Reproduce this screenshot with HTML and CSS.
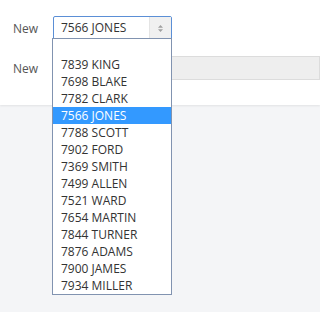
FILE: index.html
```html
<!DOCTYPE html>
<html>
<head>
<meta charset="utf-8">
<link rel="stylesheet" href="styles.css">
</head>
<body>
<div class="panel">
  <div class="row">
    <span class="label">New</span>
    <div class="select">
      <span class="value">7566 JONES</span>
      <span class="arrow">
        <svg width="5" height="7" viewBox="0 0 5 7"><path d="M2.5 0 L5 2.8 L0 2.8 Z M0 4.2 L5 4.2 L2.5 7 Z" fill="#a0a0a0"/></svg>
      </span>
    </div>
  </div>
  <div class="row">
    <span class="label">New</span>
    <div class="input"></div>
  </div>
</div>
<ul class="listbox">
  <li class="opt"></li>
  <li class="opt">7839 KING</li>
  <li class="opt">7698 BLAKE</li>
  <li class="opt">7782 CLARK</li>
  <li class="opt selected">7566 JONES</li>
  <li class="opt">7788 SCOTT</li>
  <li class="opt">7902 FORD</li>
  <li class="opt">7369 SMITH</li>
  <li class="opt">7499 ALLEN</li>
  <li class="opt">7521 WARD</li>
  <li class="opt">7654 MARTIN</li>
  <li class="opt">7844 TURNER</li>
  <li class="opt">7876 ADAMS</li>
  <li class="opt">7900 JAMES</li>
  <li class="opt">7934 MILLER</li>
</ul>
</body>
</html>
```

FILE: styles.css
```css
html {
  background: #f4f5f7;
}
body {
  margin: 0;
  padding: 0;
  font-family: "Open Sans", "Noto Sans", sans-serif;
  font-size: 12px;
  color: #333;
  overflow: hidden;
  position: relative;
  min-height: 312px;
}
.panel {
  background: #fff;
  height: 105px;
  box-shadow: 0 1px 2px rgba(0,0,0,0.08);
  padding-top: 16px;
  box-sizing: border-box;
  display: flex;
  flex-direction: column;
  gap: 16px;
}
.row {
  display: flex;
  align-items: center;
  height: 24px;
}
.label {
  width: 53px;
  padding-left: 13px;
  box-sizing: border-box;
  color: #555;
  font-size: 12px;
  flex: none;
}
.select {
  width: 119px;
  height: 24px;
  box-sizing: border-box;
  border: 1px solid #5b8fd6;
  border-radius: 2px;
  display: flex;
  align-items: stretch;
  flex: none;
}
.value {
  flex: 1;
  padding-left: 7px;
  line-height: 22px;
  color: #333;
}
.arrow {
  width: 21px;
  background: #f0f0f0;
  border-left: 1px solid #e4e4e4;
  display: flex;
  align-items: center;
  justify-content: center;
}
.input {
  flex: 1;
  height: 24px;
  box-sizing: border-box;
  background: #eeeeee;
  border: 1px solid #dcdcdc;
}
.listbox {
  position: absolute;
  top: 38px;
  left: 52px;
  width: 120px;
  margin: 0;
  padding: 0;
  list-style: none;
  background: #fff;
  border: 1px solid #8193b0;
  box-sizing: border-box;
}
.opt {
  height: 17px;
  line-height: 17px;
  padding-left: 8px;
  color: #333;
  white-space: nowrap;
}
.opt.selected {
  background: #3399ff;
  color: #fff;
}
```
